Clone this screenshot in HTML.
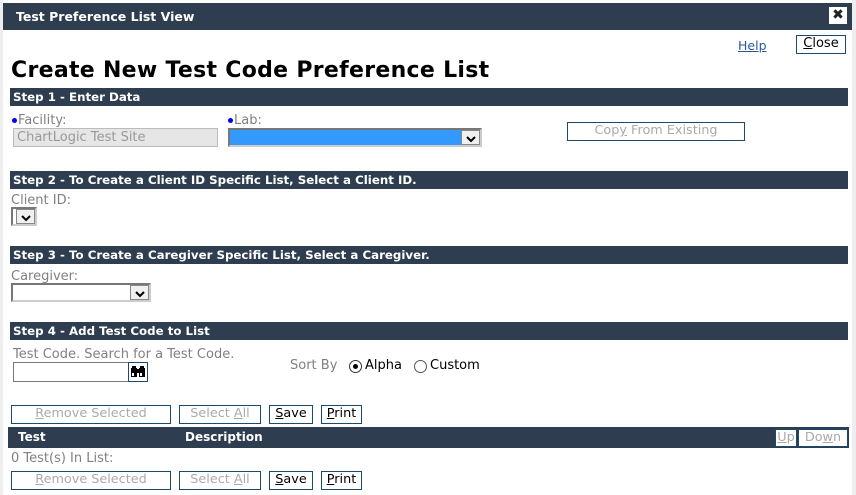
<!DOCTYPE html>
<html><head><meta charset="utf-8"><style>
*{margin:0;padding:0;box-sizing:border-box}
body{width:856px;height:495px;background:#fff;font-family:"DejaVu Sans",Verdana,sans-serif;font-size:12px;color:#808080;position:relative;overflow:hidden}
.a{position:absolute}
.bar{position:absolute;background:#2e3e50;color:#fff;font-weight:bold;font-size:11.8px;line-height:18px;padding-left:3px;left:10px;width:838px;height:18px}
.btn{position:absolute;border:1px solid #1b4a6e;background:#fff;text-align:center;font-size:12.8px;line-height:16px;color:#aaa}
.btn.on{color:#000}
.lbl{position:absolute;font-size:13px;color:#808080}
.dd{position:absolute;background:#f0f0f0;border:1px solid #888;width:19px;top:0;bottom:0;right:0}
.dd svg{position:absolute;left:4px;top:5px}
.dot{display:inline-block;width:5px;height:5px;border-radius:50%;background:#00f;vertical-align:1px;margin-right:1px}
</style></head><body>
<div class="a" style="left:0;top:0;width:3px;height:495px;background:#eee"></div>
<div class="a" style="left:852px;top:0;width:4px;height:495px;background:#eee"></div>
<div class="a" style="left:3px;top:3px;width:849px;height:27px;background:#2e3e50;color:#fff;font-weight:bold;font-size:12.5px;line-height:28px;padding-left:13px">Test Preference List View</div>
<div class="a" style="left:829px;top:7px;width:18px;height:17px;background:#fff;color:#222;font-weight:bold;font-size:14px;line-height:17px;text-align:center">✖</div>
<div class="a" style="left:738px;top:38px;color:#2b5797;text-decoration:underline;font-size:12.5px">Help</div>
<div class="btn on" style="left:796px;top:35px;width:50px;height:19px;font-size:13px"><u>C</u>lose</div>
<div class="a" style="left:11px;top:58px;color:#000;font-weight:bold;font-size:22px;letter-spacing:0.3px">Create New Test Code Preference List</div>
<div class="bar" style="top:88px">Step 1 - Enter Data</div>
<div class="lbl" style="left:12px;top:113px"><span class="dot"></span>Facility:</div>
<div class="a" style="left:13px;top:128px;width:205px;height:19px;background:#e6e6e6;border:1px solid #bbb;font-size:13px;line-height:17px;padding-left:3px;color:#999">ChartLogic Test Site</div>
<div class="lbl" style="left:228px;top:113px"><span class="dot"></span>Lab:</div>
<div class="a" style="left:228px;top:128px;width:254px;height:19px;border:2px solid #777;border-right-color:#ccc;border-bottom-color:#ccc;background:#3399ff"><div class="dd"><svg width="10" height="7"><path d="M1 1L5 5L9 1" stroke="#000" stroke-width="2" fill="none"/></svg></div></div>
<div class="btn" style="left:567px;top:122px;width:178px;height:19px">Cop<u>y</u> From Existing</div>
<div class="bar" style="top:171px">Step 2 - To Create a Client ID Specific List, Select a Client ID.</div>
<div class="lbl" style="left:11px;top:193px">Client ID:</div>
<div class="a" style="left:11px;top:207px;width:26px;height:19px;border:2px solid #777;border-right-color:#ccc;border-bottom-color:#ccc;background:#fff"><div class="dd"><svg width="10" height="7"><path d="M1 1L5 5L9 1" stroke="#000" stroke-width="2" fill="none"/></svg></div></div>
<div class="bar" style="top:246px">Step 3 - To Create a Caregiver Specific List, Select a Caregiver.</div>
<div class="lbl" style="left:11px;top:269px">Caregiver:</div>
<div class="a" style="left:11px;top:283px;width:140px;height:19px;border:2px solid #777;border-right-color:#ccc;border-bottom-color:#ccc;background:#fff"><div class="dd"><svg width="10" height="7"><path d="M1 1L5 5L9 1" stroke="#000" stroke-width="2" fill="none"/></svg></div></div>
<div class="bar" style="top:322px">Step 4 - Add Test Code to List</div>
<div class="lbl" style="left:13px;top:347px">Test Code. Search for a Test Code.</div>
<div class="a" style="left:13px;top:362px;width:116px;height:20px;border:1px solid #777;background:#fff"></div>
<div class="a" style="left:128px;top:362px;width:20px;height:20px;border:1px solid #1b4a6e;background:#fff">
<svg width="18" height="18" viewBox="0 0 18 18" style="position:absolute;left:0;top:0"><rect x="3" y="3" width="4" height="2" fill="#000"/><rect x="11" y="3" width="4" height="2" fill="#000"/><rect x="2" y="5" width="6" height="9" fill="#000"/><rect x="10" y="5" width="6" height="9" fill="#000"/><rect x="7" y="6" width="4" height="4" fill="#000"/><rect x="3" y="10" width="2" height="3" fill="#fff"/><rect x="11" y="10" width="2" height="3" fill="#fff"/></svg></div>
<div class="lbl" style="left:290px;top:358px">Sort By</div>
<div class="a" style="left:349px;top:360px;width:13px;height:13px;border:1px solid #333;border-radius:50%;background:#fff"><div class="a" style="left:3px;top:3px;width:5px;height:5px;border-radius:50%;background:#000"></div></div>
<div class="a" style="left:365px;top:358px;font-size:13px;color:#000">Alpha</div>
<div class="a" style="left:414px;top:360px;width:13px;height:13px;border:1px solid #555;border-radius:50%;background:#fff"></div>
<div class="a" style="left:430px;top:358px;font-size:13px;color:#000">Custom</div>
<div class="btn" style="left:11px;top:405px;width:160px;height:19px"><u>R</u>emove Selected</div>
<div class="btn" style="left:179px;top:405px;width:82px;height:19px">Select <u>A</u>ll</div>
<div class="btn on" style="left:269px;top:405px;width:44px;height:19px"><u>S</u>ave</div>
<div class="btn on" style="left:321px;top:405px;width:41px;height:19px"><u>P</u>rint</div>
<div class="a" style="left:8px;top:427px;width:841px;height:21px;background:#2e3e50;color:#fff;font-weight:bold;font-size:12px;line-height:21px">
<span class="a" style="left:10px">Test</span><span class="a" style="left:177px">Description</span></div>
<div class="btn" style="left:775px;top:429px;width:22px;height:18px;line-height:16px"><u>U</u>p</div>
<div class="btn" style="left:798px;top:429px;width:50px;height:18px;line-height:16px">Do<u>w</u>n</div>
<div class="lbl" style="left:11px;top:451px">0 Test(s) In List:</div>
<div class="btn" style="left:11px;top:471px;width:160px;height:19px"><u>R</u>emove Selected</div>
<div class="btn" style="left:179px;top:471px;width:82px;height:19px">Select <u>A</u>ll</div>
<div class="btn on" style="left:269px;top:471px;width:44px;height:19px"><u>S</u>ave</div>
<div class="btn on" style="left:321px;top:471px;width:41px;height:19px"><u>P</u>rint</div>
</body></html>
